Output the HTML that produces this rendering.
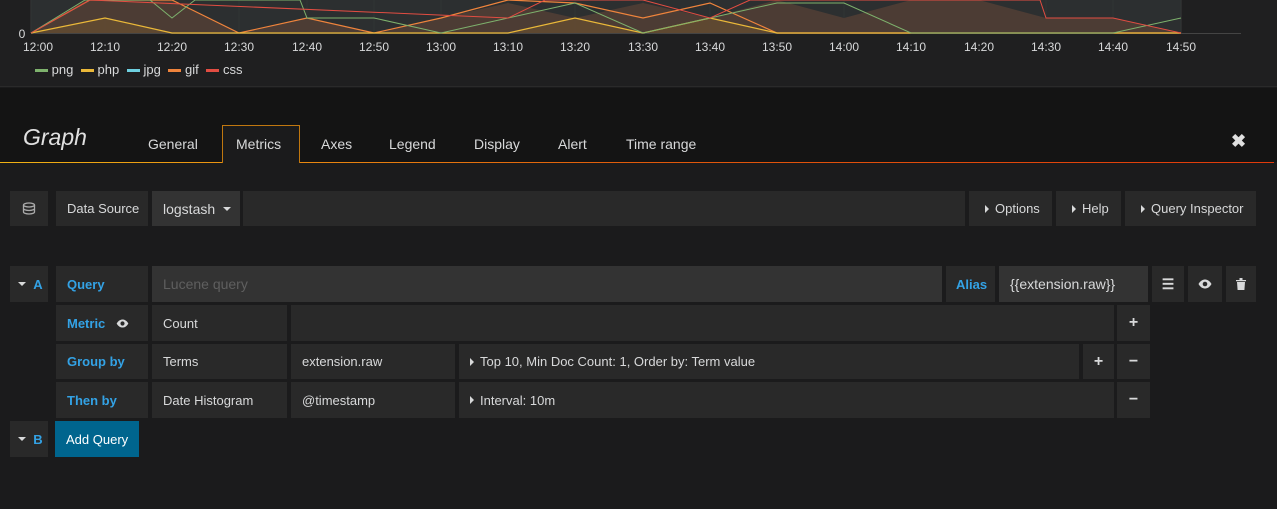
<!DOCTYPE html>
<html><head><meta charset="utf-8"><style>
*{box-sizing:border-box;margin:0;padding:0}
body{width:1277px;height:509px;background:#1b1b1c;font-family:"Liberation Sans",sans-serif;color:#d8d9da;font-size:13px;position:relative;overflow:hidden}
.abs{position:absolute}
.c{position:absolute;background:#292929;display:flex;align-items:center;padding-left:11px;white-space:nowrap}
.lbl{color:#33a2e5;font-weight:bold}
.ctr{justify-content:center;padding-left:0}
.tab{position:absolute;top:136px;font-size:14px;color:#d8d9da}
.tri{display:inline-block;width:0;height:0;border-top:4px solid transparent;border-bottom:4px solid transparent;border-left:4px solid #d8d9da;margin-right:6px}
.dn{display:inline-block;width:0;height:0;border-left:4px solid transparent;border-right:4px solid transparent;border-top:4px solid #d8d9da}
</style></head><body>
<div class="abs" style="left:0;top:0;width:1277px;height:87px;background:#1f1f20;border-bottom:1px solid #2a2a2a"></div>
<svg class="abs" style="left:0;top:0" width="1277" height="60">
<g stroke="#3a3a3a" stroke-width="1">
<line x1="31" y1="0" x2="31" y2="33"/><line x1="105" y1="0" x2="105" y2="33"/><line x1="172" y1="0" x2="172" y2="33"/><line x1="239" y1="0" x2="239" y2="33"/><line x1="307" y1="0" x2="307" y2="33"/><line x1="374" y1="0" x2="374" y2="33"/><line x1="441" y1="0" x2="441" y2="33"/><line x1="508" y1="0" x2="508" y2="33"/><line x1="575" y1="0" x2="575" y2="33"/><line x1="643" y1="0" x2="643" y2="33"/><line x1="710" y1="0" x2="710" y2="33"/><line x1="777" y1="0" x2="777" y2="33"/><line x1="844" y1="0" x2="844" y2="33"/><line x1="911" y1="0" x2="911" y2="33"/><line x1="979" y1="0" x2="979" y2="33"/><line x1="1046" y1="0" x2="1046" y2="33"/><line x1="1113" y1="0" x2="1113" y2="33"/><line x1="1181" y1="0" x2="1181" y2="33"/>
<line x1="31" y1="33.5" x2="1241" y2="33.5" stroke="#444"/>
</g>
<polygon points="31,33 31,0 1181,0 1181,33" fill="#2f3334" opacity=".8"/>
<polygon points="31,33 86,0 172,0 239,33 307,18 374,33 508,3 575,18 643,3 710,18 777,0 844,18 911,0 979,0 1046,18 1113,18 1181,33" fill="#5a4236" opacity=".7"/>
<polygon points="31,33 105,18 172,33 508,33 575,18 643,33 710,18 777,33 1181,33" fill="#6a5030" opacity=".6"/>
<polyline points="31,33 90,0 172,0 239,33 307,18 374,33 441,18 508,0 575,3 643,18 710,3 777,33 844,33 911,33 979,33 1046,33 1113,33 1181,33" fill="none" stroke="#ef843c" stroke-width="1.2"/>
<polyline points="31,33 105,18 172,33 508,33 575,18 643,33 710,18 777,33 1181,33" fill="none" stroke="#eab839" stroke-width="1.2"/>
<polyline points="31,33 85,0 150,0 172,18 195,0 300,0 307,18 374,18 441,33 508,18 575,3 643,33 710,18 777,3 844,3 911,33 1113,33 1181,18" fill="none" stroke="#7eb26d" stroke-width="1"/>
<polyline points="31,33 90,0 508,18 545,0 643,0 710,18 750,0 1040,0 1046,18 1113,18 1181,33" fill="none" stroke="#e24d42" stroke-width="1"/>
<g fill="#d8d9da" font-size="12" text-anchor="middle" font-family="Liberation Sans,sans-serif">
<text x="22" y="38">0</text>
<text x="38" y="51">12:00</text><text x="105" y="51">12:10</text><text x="172" y="51">12:20</text><text x="239" y="51">12:30</text><text x="307" y="51">12:40</text><text x="374" y="51">12:50</text><text x="441" y="51">13:00</text><text x="508" y="51">13:10</text><text x="575" y="51">13:20</text><text x="643" y="51">13:30</text><text x="710" y="51">13:40</text><text x="777" y="51">13:50</text><text x="844" y="51">14:00</text><text x="911" y="51">14:10</text><text x="979" y="51">14:20</text><text x="1046" y="51">14:30</text><text x="1113" y="51">14:40</text><text x="1181" y="51">14:50</text>
</g>
</svg>
<div class="abs" style="left:35px;top:62px;font-size:13px;color:#d8d9da;white-space:nowrap">
<span style="display:inline-block;width:13px;height:3px;background:#7eb26d;vertical-align:middle"></span> png
<span style="display:inline-block;width:13px;height:3px;background:#eab839;vertical-align:middle;margin-left:4px"></span> php
<span style="display:inline-block;width:13px;height:3px;background:#6ed0e0;vertical-align:middle;margin-left:4px"></span> jpg
<span style="display:inline-block;width:13px;height:3px;background:#ef843c;vertical-align:middle;margin-left:4px"></span> gif
<span style="display:inline-block;width:13px;height:3px;background:#e24d42;vertical-align:middle;margin-left:4px"></span> css
</div>
<div class="abs" style="left:0;top:88px;width:1277px;height:74px;background:#141414"></div>
<div class="abs" style="left:0;top:162px;width:1274px;height:1px;background:linear-gradient(90deg,#f0b214,#e05a0b,#e03a0b)"></div>
<div class="abs" style="left:23px;top:124px;font-size:23px;font-style:italic;color:#e0e0e0">Graph</div>
<div class="tab" style="left:148px">General</div>
<div class="abs" style="left:222px;top:125px;width:78px;height:38px;background:#1b1b1c;border:1px solid #c0770f;border-bottom:none"></div>
<div class="tab" style="left:236px">Metrics</div>
<div class="tab" style="left:321px">Axes</div>
<div class="tab" style="left:389px">Legend</div>
<div class="tab" style="left:474px">Display</div>
<div class="tab" style="left:558px">Alert</div>
<div class="tab" style="left:626px">Time range</div>
<div class="abs" style="left:1231px;top:131px;font-size:18px;font-weight:bold;color:#e0e0e0">✖</div>

<div class="c ctr" style="left:10px;top:191px;width:38px;height:35px"><svg width="14" height="14" viewBox="0 0 14 14"><g fill="none" stroke="#aaa" stroke-width="1.3"><ellipse cx="7" cy="3" rx="5.5" ry="2"/><path d="M1.5 3v7c0 1.1 2.5 2 5.5 2s5.5-.9 5.5-2V3M1.5 6.5c0 1.1 2.5 2 5.5 2s5.5-.9 5.5-2"/></g></svg></div>
<div class="c" style="left:56px;top:191px;width:92px;height:35px">Data Source</div>
<div class="c" style="left:152px;top:191px;width:88px;height:35px;background:#333;font-size:14px">logstash&nbsp;&nbsp;<span class="dn"></span></div>
<div class="c" style="left:243px;top:191px;width:722px;height:35px"></div>
<div class="c" style="left:969px;top:191px;width:83px;height:35px;padding-left:16px"><span class="tri"></span>Options</div>
<div class="c" style="left:1056px;top:191px;width:65px;height:35px;padding-left:16px"><span class="tri"></span>Help</div>
<div class="c" style="left:1125px;top:191px;width:131px;height:35px;padding-left:16px"><span class="tri"></span>Query Inspector</div>

<div class="c" style="left:10px;top:266px;width:38px;height:36px;padding-left:8px"><span class="dn"></span>&nbsp;&nbsp;<span class="lbl">A</span></div>
<div class="c lbl" style="left:56px;top:266px;width:92px;height:36px">Query</div>
<div class="c" style="left:152px;top:266px;width:790px;height:36px;background:#333;color:#5f5f5f;font-size:14px">Lucene query</div>
<div class="c lbl" style="left:946px;top:266px;width:49px;height:36px;padding-left:10px">Alias</div>
<div class="c" style="left:999px;top:266px;width:149px;height:36px;background:#333;font-size:14px">{{extension.raw}}</div>
<div class="c ctr" style="left:1152px;top:266px;width:32px;height:36px;font-size:14px;font-weight:bold">☰</div>
<div class="c ctr" style="left:1188px;top:266px;width:34px;height:36px"><svg width="14" height="10" viewBox="0 0 14 10"><path d="M0.5 5C2.5 1.5 5 0.5 7 0.5s4.5 1 6.5 4.5C11.5 8.5 9 9.5 7 9.5S2.5 8.5.5 5z" fill="#d8d9da"/><circle cx="7" cy="5" r="2.3" fill="#292929"/></svg></div>
<div class="c ctr" style="left:1226px;top:266px;width:30px;height:36px"><svg width="10" height="12" viewBox="0 0 10 12"><path d="M0 2h10v1.3H0zM3.5 0h3v2h-3zM1 4h8l-.6 8H1.6z" fill="#d8d9da"/></svg></div>

<div class="c lbl" style="left:56px;top:305px;width:92px;height:36px">Metric&nbsp;&nbsp;&nbsp;<svg width="13" height="9" viewBox="0 0 14 10"><path d="M0.5 5C2.5 1.5 5 0.5 7 0.5s4.5 1 6.5 4.5C11.5 8.5 9 9.5 7 9.5S2.5 8.5.5 5z" fill="#d8d9da"/><circle cx="7" cy="5" r="2.3" fill="#292929"/></svg></div>
<div class="c" style="left:152px;top:305px;width:135px;height:36px">Count</div>
<div class="c" style="left:291px;top:305px;width:823px;height:36px"></div>
<div class="c ctr" style="left:1117px;top:305px;width:33px;height:36px;font-size:16px;font-weight:bold">+</div>

<div class="c lbl" style="left:56px;top:344px;width:92px;height:35px">Group by</div>
<div class="c" style="left:152px;top:344px;width:135px;height:35px">Terms</div>
<div class="c" style="left:291px;top:344px;width:164px;height:35px">extension.raw</div>
<div class="c" style="left:459px;top:344px;width:620px;height:35px;padding-left:11px"><span class="tri"></span>Top 10, Min Doc Count: 1, Order by: Term value</div>
<div class="c ctr" style="left:1083px;top:344px;width:31px;height:35px;font-size:16px;font-weight:bold">+</div>
<div class="c ctr" style="left:1117px;top:344px;width:33px;height:35px;font-size:16px;font-weight:bold">−</div>

<div class="c lbl" style="left:56px;top:382px;width:92px;height:36px">Then by</div>
<div class="c" style="left:152px;top:382px;width:135px;height:36px">Date Histogram</div>
<div class="c" style="left:291px;top:382px;width:164px;height:36px">@timestamp</div>
<div class="c" style="left:459px;top:382px;width:655px;height:36px;padding-left:11px"><span class="tri"></span>Interval: 10m</div>
<div class="c ctr" style="left:1117px;top:382px;width:33px;height:36px;font-size:16px;font-weight:bold">−</div>

<div class="c" style="left:10px;top:421px;width:38px;height:36px;padding-left:8px"><span class="dn"></span>&nbsp;&nbsp;<span class="lbl">B</span></div>
<div class="c" style="left:55px;top:421px;width:84px;height:36px;background:#00658e;color:#fff;padding-left:11px">Add Query</div>
</body></html>
